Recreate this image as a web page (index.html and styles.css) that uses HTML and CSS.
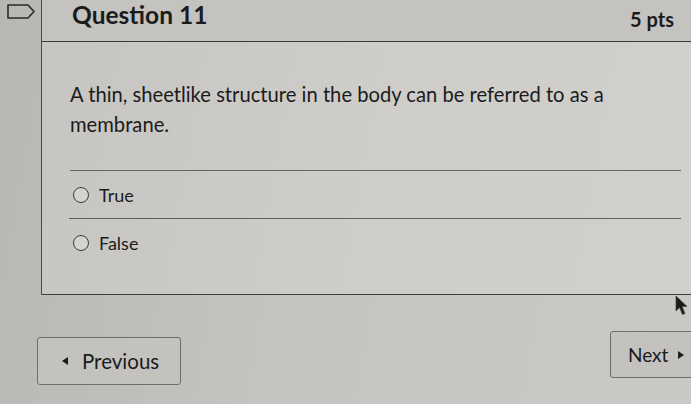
FILE: index.html
```html
<!DOCTYPE html>
<html lang="en">
<head>
    <meta charset="UTF-8">
    <meta name="viewport" content="width=device-width, initial-scale=1.0">
    <title>Question 11</title>
    <link rel="stylesheet" href="styles.css">
</head>
<body>
    <div class="page">
        <div class="quiz">
            <div class="gutter">
                <svg class="flag" width="30" height="16" viewBox="0 0 30 16">
                    <path d="M2 2 H22 L28 8.5 L22 15 H2 Z" fill="none" stroke="#2a2a2a" stroke-width="1.6" stroke-linejoin="round"/>
                </svg>
            </div>

            <div class="question">
                <div class="header">
                    <span class="title">Question 11</span>
                    <span class="pts">5 pts</span>
                </div>

                <div class="body">
                    <p class="text">A thin, sheetlike structure in the body can be referred to as a membrane.</p>

                    <div class="answers">
                        <label class="answer">
                            <span class="radio"></span>
                            <span>True</span>
                        </label>
                        <label class="answer">
                            <span class="radio"></span>
                            <span>False</span>
                        </label>
                    </div>
                </div>
            </div>
        </div>

        <div class="nav">
            <button class="btn prev"><span class="tri left"></span>Previous</button>
            <button class="btn next">Next<span class="tri right"></span></button>
        </div>

        <svg class="cursor" width="14" height="22" viewBox="0 0 14 22">
            <path d="M1 1 L1 16 L4.5 12.5 L7.5 19.5 L10 18.5 L7 11.5 L12 11.5 Z" fill="#1a1a1a" stroke="#444" stroke-width="0.8"/>
        </svg>
    </div>
</body>
</html>
```

FILE: styles.css
```css
html, body { margin: 0; height: 100%; overflow: hidden; }
body {
    font-family: Lato, "Open Sans", sans-serif;
    color: #1b1b1b;
    background: linear-gradient(100deg, #b9b7b4 0%, #c6c4c1 45%, #cbc9c6 100%);
}
.page { position: relative; width: 691px; height: 404px; }

.quiz { display: flex; height: 295px; }
.gutter { width: 41px; flex: none; padding: 3px 0 0 6px; box-sizing: border-box; }
.flag { display: block; }

.question {
    flex: 1;
    border-left: 1.5px solid #4a4a4a;
    border-bottom: 1.5px solid #3e3e3e;
    background: linear-gradient(100deg, #c7c5c2 0%, #cfcdca 50%, #d2d0cd 100%);
}
.header {
    height: 42px;
    box-sizing: border-box;
    display: flex;
    justify-content: space-between;
    align-items: flex-start;
    padding: 0 17px 0 30px;
    border-bottom: 1.5px solid #3a3a3a;
    background: #c5c3c0;
}
.title { font-size: 24.5px; font-weight: 700; line-height: 29px; }
.pts { font-size: 20px; font-weight: 700; line-height: 24px; padding-top: 7px; }

.body { padding: 37px 10px 0 27px; }
.text {
    margin: 0 0 0 1px;
    font-size: 20.2px;
    line-height: 30px;
    padding-bottom: 31px;
    border-bottom: 1.5px solid #666;
}
.answers { display: flex; flex-direction: column; }
.answer {
    display: flex;
    align-items: center;
    gap: 10px;
    height: 47px;
    padding-left: 4px;
    font-size: 18px;
}
.answer:first-child { border-bottom: 1.5px solid #5e5e5e; }
.radio {
    width: 14px;
    height: 14px;
    border: 1.5px solid #3a3a3a;
    border-radius: 50%;
    background: #d6d4d1;
}

.nav { position: relative; height: 109px; }
.btn {
    font-family: Lato, "Open Sans", sans-serif;
    font-size: 19px;
    color: #1b1b1b;
    background: #c4c2bf;
    border: 1.5px solid #6e6e6e;
    border-radius: 3px;
    display: flex;
    align-items: center;
    box-sizing: border-box;
    position: absolute;
}
.prev { left: 37px; top: 42px; width: 144px; height: 48px; padding: 0 0 0 24px; gap: 14px; font-size: 20.5px; }
.next { left: 610px; top: 36px; width: 100px; height: 47px; padding: 0 0 0 17px; gap: 10px; }
.tri { width: 0; height: 0; border-top: 4.5px solid transparent; border-bottom: 4.5px solid transparent; }
.tri.left { border-right: 6px solid #1b1b1b; }
.tri.right { border-left: 6px solid #1b1b1b; }

.cursor { position: absolute; left: 675px; top: 295px; }
```
